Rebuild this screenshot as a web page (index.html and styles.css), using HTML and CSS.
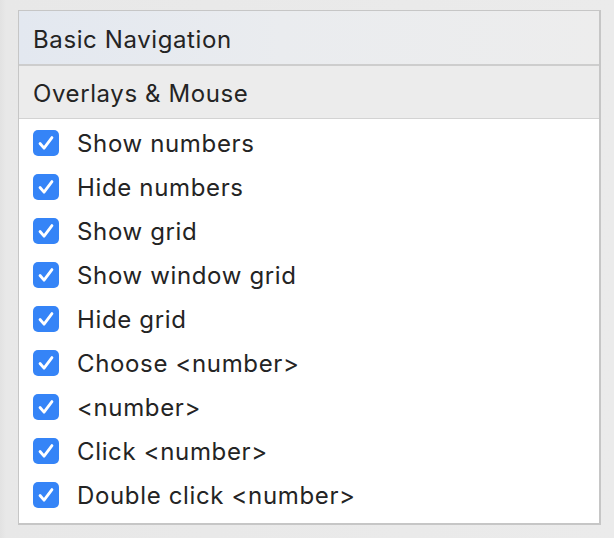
FILE: index.html
```html
<!DOCTYPE html>
<html>
<head>
<meta charset="utf-8">
<link rel="stylesheet" href="styles.css">
</head>
<body>
<div class="panel">
  <div class="section section-first">Basic Navigation</div>
  <div class="section section-second">Overlays &amp; Mouse</div>
  <ul class="list">
    <li class="row"><span class="check"><svg viewBox="0 0 24 24"><path d="M6.5 12.5 L10.2 16.8 L17.5 7"/></svg></span><span class="label">Show numbers</span></li>
    <li class="row"><span class="check"><svg viewBox="0 0 24 24"><path d="M6.5 12.5 L10.2 16.8 L17.5 7"/></svg></span><span class="label">Hide numbers</span></li>
    <li class="row"><span class="check"><svg viewBox="0 0 24 24"><path d="M6.5 12.5 L10.2 16.8 L17.5 7"/></svg></span><span class="label">Show grid</span></li>
    <li class="row"><span class="check"><svg viewBox="0 0 24 24"><path d="M6.5 12.5 L10.2 16.8 L17.5 7"/></svg></span><span class="label">Show window grid</span></li>
    <li class="row"><span class="check"><svg viewBox="0 0 24 24"><path d="M6.5 12.5 L10.2 16.8 L17.5 7"/></svg></span><span class="label">Hide grid</span></li>
    <li class="row"><span class="check"><svg viewBox="0 0 24 24"><path d="M6.5 12.5 L10.2 16.8 L17.5 7"/></svg></span><span class="label">Choose &lt;number&gt;</span></li>
    <li class="row"><span class="check"><svg viewBox="0 0 24 24"><path d="M6.5 12.5 L10.2 16.8 L17.5 7"/></svg></span><span class="label">&lt;number&gt;</span></li>
    <li class="row"><span class="check"><svg viewBox="0 0 24 24"><path d="M6.5 12.5 L10.2 16.8 L17.5 7"/></svg></span><span class="label">Click &lt;number&gt;</span></li>
    <li class="row"><span class="check"><svg viewBox="0 0 24 24"><path d="M6.5 12.5 L10.2 16.8 L17.5 7"/></svg></span><span class="label">Double click &lt;number&gt;</span></li>
  </ul>
</div>
</body>
</html>
```
FILE: styles.css
```css
html, body {
  margin: 0;
  padding: 0;
}
body {
  width: 614px;
  height: 538px;
  background: linear-gradient(to right, #e2e2e2 0, #e8e8e8 6px, #ebebeb 100%);
  font-family: "Inter", "Liberation Sans", sans-serif;
  color: #242424;
  padding: 10px 0 0 18px;
  box-sizing: border-box;
}
.panel {
  width: 583px;
  height: 515px;
  box-sizing: border-box;
  border-style: solid;
  border-color: #c6c6c6;
  border-width: 1px 2px 2px 1px;
  background: #ffffff;
  display: flex;
  flex-direction: column;
}
.section {
  font-size: 24px;
  padding-left: 14px;
  padding-top: 3px;
  box-sizing: border-box;
  display: flex;
  align-items: center;
  letter-spacing: 0.6px;
}
.section-first {
  height: 55px;
  background: linear-gradient(to right, #e3e8f0 0, #eaecef 45%, #ededed 100%);
  border-bottom: 2px solid #cdcdcd;
}
.section-second {
  height: 53px;
  background: #ececec;
  border-bottom: 1px solid #d3d3d3;
}
.list {
  list-style: none;
  margin: 0;
  padding: 2px 0 0 0;
}
.row {
  height: 44px;
  display: flex;
  align-items: center;
  padding-left: 14px;
}
.check {
  width: 26px;
  height: 26px;
  border-radius: 5px;
  background: #3584f7;
  display: flex;
  align-items: center;
  justify-content: center;
  flex-shrink: 0;
}
.check svg {
  width: 26px;
  height: 26px;
  fill: none;
  stroke: #ffffff;
  stroke-width: 2.6;
  stroke-linecap: round;
  stroke-linejoin: round;
}
.label {
  font-size: 24px;
  margin-left: 18px;
  letter-spacing: 0.65px;
}
```
